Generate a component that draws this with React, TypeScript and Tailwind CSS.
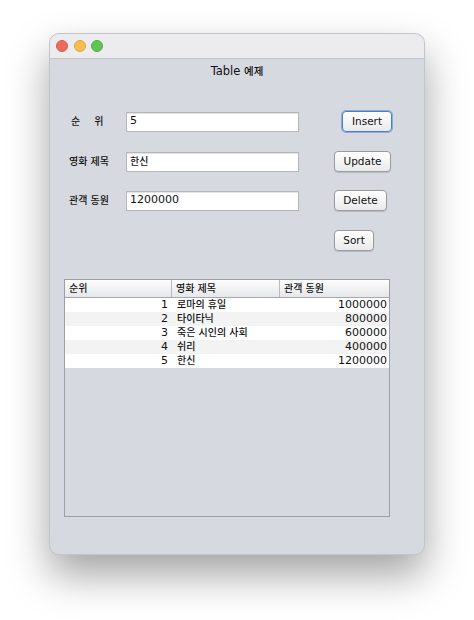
import React from "react";

const rows: [number, string, number][] = [
  [1, "로마의 휴일", 1000000],
  [2, "타이타닉", 800000],
  [3, "죽은 시인의 사회", 600000],
  [4, "쉬리", 400000],
  [5, "한신", 1200000],
];

function Btn({ label, w, ml, focus }: { label: string; w: string; ml: string; focus?: boolean }) {
  return (
    <div
      className={`${w} ${ml} h-[21px] rounded-[4px] flex items-center justify-center text-[10.5px] text-[#111] bg-gradient-to-b from-[#ffffff] to-[#eaeaec] ${
        focus
          ? "border border-[#4a7fc6] shadow-[0_0_0_1px_rgba(90,140,210,0.6)]"
          : "border border-[#999ba1] shadow-[0_1px_1px_rgba(0,0,0,0.14)]"
      }`}
    >
      {label}
    </div>
  );
}

function Field({ value, size }: { value: string; size: string }) {
  return (
    <div
      className={`w-[173px] h-[20px] bg-white border border-[#b4b6bb] shadow-[inset_0_1px_1px_rgba(0,0,0,0.12)] flex items-center pl-[3px] ${size} text-[#111]`}
    >
      {value}
    </div>
  );
}

export default function App() {
  return (
    <div
      className="w-[474px] h-[620px] bg-white pt-[33px] pl-[49px] font-medium"
      style={{ fontFamily: '"DejaVu Sans", "Noto Sans CJK KR", sans-serif' }}
    >
      <div className="w-[376px] h-[522px] rounded-[10px] overflow-hidden flex flex-col bg-[#d6d9e0] border border-[#c3c4c9] shadow-[0_20px_40px_rgba(0,0,0,0.36)]">
        <div className="h-[25px] shrink-0 bg-[#ececef] border-b border-[#c5c6cb] flex items-center pl-[6px] gap-[5.5px]">
          <div className="w-[12px] h-[12px] rounded-full bg-[#ed6a5e] border border-[#d65a4f]" />
          <div className="w-[12px] h-[12px] rounded-full bg-[#f5bf4f] border border-[#dca73c]" />
          <div className="w-[12px] h-[12px] rounded-full bg-[#61c554] border border-[#50ad45]" />
        </div>
        <div className="flex-1 flex flex-col">
          <div className="pt-[5px] text-center leading-[14px] text-[11.5px] text-[#111]">
            Table <span className="text-[10.5px]">예제</span>
          </div>

          <div className="mt-[33px] flex items-center h-[21px] pl-[19px]">
            <div className="w-[57px] text-[10px] text-[#111] flex pl-[2px]">
              <span>순</span>
              <span className="ml-[14px]">위</span>
            </div>
            <Field value="5" size="text-[11px]" />
            <Btn label="Insert" w="w-[50px]" ml="ml-[43px]" focus />
          </div>

          <div className="mt-[19px] flex items-center h-[21px] pl-[19px]">
            <div className="w-[57px] text-[10px] text-[#111]">영화 제목</div>
            <Field value="한신" size="text-[10px]" />
            <Btn label="Update" w="w-[57px]" ml="ml-[35px]" />
          </div>

          <div className="mt-[18px] flex items-center h-[21px] pl-[19px]">
            <div className="w-[57px] text-[10px] text-[#111]">관객 동원</div>
            <Field value="1200000" size="text-[11px]" />
            <Btn label="Delete" w="w-[53px]" ml="ml-[35px]" />
          </div>

          <div className="mt-[19px] flex items-center h-[21px] pl-[284px]">
            <Btn label="Sort" w="w-[40px]" ml="ml-0" />
          </div>

          <div className="mt-[28px] ml-[14px] w-[326px] h-[238px] border border-[#9c9fa6] flex flex-col bg-[#d6d9e0]">
            <div className="h-[18px] shrink-0 grid grid-cols-[107px_108px_1fr] bg-gradient-to-b from-[#fdfdfd] to-[#e6e7ea] border-b border-[#a6a8ae] text-[10px] text-[#111]">
              <div className="pl-[4px] flex items-center border-r border-[#b8bac0]">순위</div>
              <div className="pl-[4px] flex items-center border-r border-[#b8bac0]">영화 제목</div>
              <div className="pl-[4px] flex items-center">관객 동원</div>
            </div>
            {rows.map(([r, t, n], i) => (
              <div
                key={r}
                className={`h-[14px] grid grid-cols-[107px_108px_1fr] items-center text-[#111] ${
                  i % 2 === 0 ? "bg-white" : "bg-[#f3f3f4]"
                }`}
              >
                <div className="text-right pr-[4px] text-[11px] leading-[14px]">{r}</div>
                <div className="pl-[5px] text-[10px] leading-[14px]">{t}</div>
                <div className="text-right pr-[2px] text-[11px] leading-[14px]">{n}</div>
              </div>
            ))}
          </div>
        </div>
      </div>
    </div>
  );
}
